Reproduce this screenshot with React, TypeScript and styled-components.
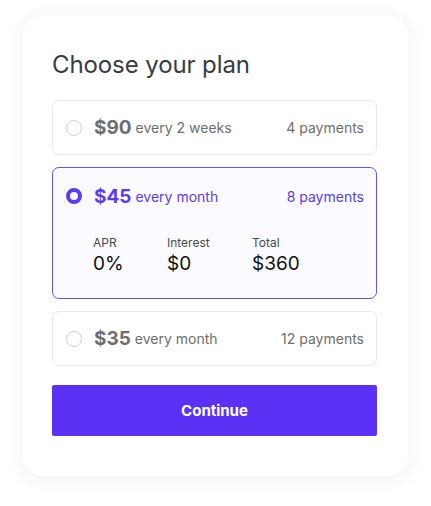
import React, { useState } from 'react';
import styled, { createGlobalStyle } from 'styled-components';

const GlobalStyle = createGlobalStyle`
  body {
    margin: 0;
    background: #ffffff;
    font-family: Inter, "Noto Sans", sans-serif;
  }
`;

const Page = styled.div`
  padding: 15px 23px;
`;

const Card = styled.div`
  width: 385px;
  box-sizing: border-box;
  padding: 33px 31px 40px 29px;
  background: #fff;
  border-radius: 20px;
  box-shadow: 0 4px 24px rgba(0, 0, 0, 0.06);
`;

const Title = styled.h1`
  margin: 0 0 18px;
  font-size: 24px;
  font-weight: 400;
  color: #363b44;
  line-height: 34px;
  letter-spacing: -0.1px;
`;

const Options = styled.div`
  display: flex;
  flex-direction: column;
  gap: 12px;
`;

const Option = styled.div<{ $active: boolean }>`
  border: 1px solid ${p => (p.$active ? '#6a4ff0' : '#e9e9ec')};
  background: ${p => (p.$active ? '#fbfaff' : '#fff')};
  border-radius: 7px;
  cursor: pointer;
`;

const Head = styled.div<{ $active: boolean }>`
  height: ${p => (p.$active ? '56px' : '53px')};
  display: flex;
  align-items: center;
  padding: 0 12px 0 13px;
  color: ${p => (p.$active ? '#5b3cf0' : '#6e6e6e')};
`;

const Radio = styled.span<{ $active: boolean }>`
  width: 16px;
  height: 16px;
  box-sizing: border-box;
  border-radius: 50%;
  border: ${p => (p.$active ? '4px solid #5b3cf0' : '1px solid #cfcfd4')};
  margin-right: 12px;
  flex-shrink: 0;
`;

const Price = styled.span`
  font-size: 19px;
  font-weight: 700;
  margin-right: 4px;
`;

const Every = styled.span`
  font-size: 14px;
`;

const Count = styled.span`
  margin-left: auto;
  font-size: 14px;
`;

const Details = styled.div`
  display: flex;
  padding: 11px 0 21px 40px;
`;

const Stat = styled.div<{ $w: number }>`
  width: ${p => p.$w}px;
  display: flex;
  flex-direction: column;
`;

const Label = styled.span`
  font-size: 12px;
  color: #4a4a4a;
  line-height: 16px;
`;

const Value = styled.span`
  font-size: 19px;
  color: #111;
  line-height: 26px;
`;

const Button = styled.button`
  margin-top: 19px;
  width: 100%;
  height: 51px;
  border: 0;
  border-radius: 2px;
  background: #5b32f5;
  color: #fff;
  font-family: inherit;
  font-size: 15px;
  font-weight: 700;
  cursor: pointer;
`;

const plans = [
  { price: '$90', every: 'every 2 weeks', count: '4 payments', apr: '0%', interest: '$0', total: '$360' },
  { price: '$45', every: 'every month', count: '8 payments', apr: '0%', interest: '$0', total: '$360' },
  { price: '$35', every: 'every month', count: '12 payments', apr: '0%', interest: '$0', total: '$420' },
];

export default function App() {
  const [sel, setSel] = useState(1);
  return (
    <Page>
      <GlobalStyle />
      <Card>
        <Title>Choose your plan</Title>
        <Options>
          {plans.map((p, i) => (
            <Option key={i} $active={sel === i} onClick={() => setSel(i)}>
              <Head $active={sel === i}>
                <Radio $active={sel === i} />
                <Price>{p.price}</Price>
                <Every>{p.every}</Every>
                <Count>{p.count}</Count>
              </Head>
              {sel === i && (
                <Details>
                  <Stat $w={74}>
                    <Label>APR</Label>
                    <Value>{p.apr}</Value>
                  </Stat>
                  <Stat $w={85}>
                    <Label>Interest</Label>
                    <Value>{p.interest}</Value>
                  </Stat>
                  <Stat $w={80}>
                    <Label>Total</Label>
                    <Value>{p.total}</Value>
                  </Stat>
                </Details>
              )}
            </Option>
          ))}
        </Options>
        <Button>Continue</Button>
      </Card>
    </Page>
  );
}
